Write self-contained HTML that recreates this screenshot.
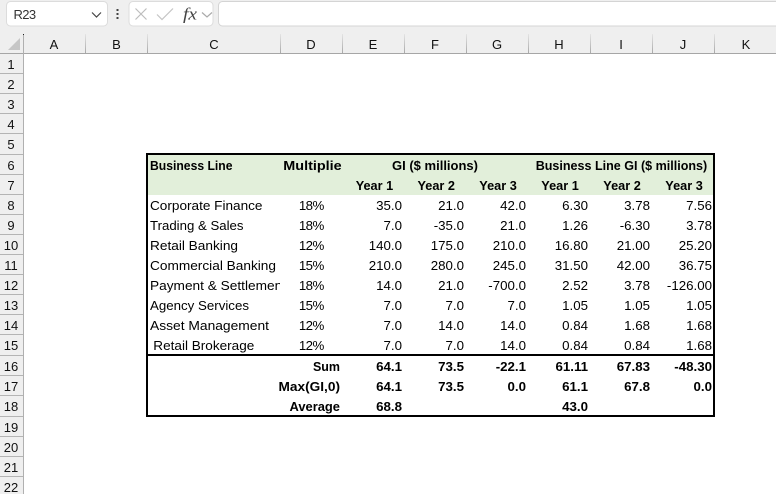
<!DOCTYPE html>
<html><head><meta charset="utf-8"><title>Sheet</title>
<style>
html,body{margin:0;padding:0;width:776px;height:494px;overflow:hidden;background:#fff}
svg{display:block;font-family:"Liberation Sans",sans-serif}
.h text{font-size:13px;fill:#111;text-anchor:middle}
.t text{font-size:13.3px;fill:#000}
.n text{font-size:13.3px;fill:#000;text-anchor:end}
.p text{font-size:13.3px;fill:#000;text-anchor:middle;letter-spacing:-.6px}
.b text{font-weight:bold}
</style></head><body>
<svg width="776" height="494" viewBox="0 0 776 494" xmlns="http://www.w3.org/2000/svg">
<defs>
<clipPath id="c1"><rect x="280" y="150" width="62" height="30"/></clipPath>
<clipPath id="c2"><rect x="148" y="275" width="132" height="20"/></clipPath>
<linearGradient id="sep" x1="0" y1="0" x2="0" y2="1"><stop offset="0" stop-color="#e4e4e4"/><stop offset="1" stop-color="#a8a8a8"/></linearGradient>
</defs>
<!-- toolbar -->
<rect x="0" y="0" width="776" height="54" fill="#efefef"/>
<rect x="6.5" y="1.5" width="101" height="24.5" rx="4" fill="#fff" stroke="#dcdcdc"/>
<text x="13.5" y="19" font-size="13" fill="#333" letter-spacing="-.6">R23</text>
<path d="M92 12.5l4.5 4.5 4.5-4.5" fill="none" stroke="#444" stroke-width="1.2"/>
<rect x="116.5" y="9" width="2" height="2" fill="#444"/><rect x="116.5" y="13" width="2" height="2" fill="#444"/><rect x="116.5" y="17" width="2" height="2" fill="#444"/>
<rect x="129" y="1.5" width="84" height="24.5" rx="4" fill="#fff" stroke="#dcdcdc"/>
<path d="M135.5 8.5l11 11M146.5 8.5l-11 11" stroke="#bdbdbd" stroke-width="1.2" fill="none"/>
<path d="M157 14.5l5 5 11-11" stroke="#c4c4c4" stroke-width="1.2" fill="none"/>
<text x="183" y="19.5" font-family="Liberation Serif,serif" font-style="italic" font-size="17" fill="#444" textLength="14" lengthAdjust="spacingAndGlyphs">fx</text>
<path d="M202 12.5l5 4.5 5-4.5" fill="none" stroke="#aaa" stroke-width="1.2"/>
<rect x="218.5" y="1.5" width="570" height="24.5" rx="4" fill="#fff" stroke="#d4d4d4"/>
<!-- headers -->
<rect x="0" y="53" width="776" height="1" fill="#a6a6a6"/>
<rect x="0" y="54" width="23" height="440" fill="#efefef"/>
<rect x="23" y="34" width="1" height="460" fill="#b0b0b0"/>
<rect x="23" y="34" width="1" height="1" fill="#222"/>
<path d="M20 38V50H8Z" fill="#c6c6c6"/>
<g fill="url(#sep)">
<rect x="85" y="34" width="1" height="19"/><rect x="147" y="34" width="1" height="19"/><rect x="280" y="34" width="1" height="19"/>
<rect x="342" y="34" width="1" height="19"/><rect x="404" y="34" width="1" height="19"/><rect x="466" y="34" width="1" height="19"/>
<rect x="528" y="34" width="1" height="19"/><rect x="590" y="34" width="1" height="19"/><rect x="652" y="34" width="1" height="19"/><rect x="714" y="34" width="1" height="19"/>
</g>
<g fill="#b4b4b4">
<rect x="0" y="73" width="23" height="1"/><rect x="0" y="93" width="23" height="1"/><rect x="0" y="113" width="23" height="1"/><rect x="0" y="133" width="23" height="1"/><rect x="0" y="154" width="23" height="1"/><rect x="0" y="174" width="23" height="1"/><rect x="0" y="194" width="23" height="1"/><rect x="0" y="214" width="23" height="1"/><rect x="0" y="234" width="23" height="1"/><rect x="0" y="254" width="23" height="1"/><rect x="0" y="274" width="23" height="1"/><rect x="0" y="294" width="23" height="1"/><rect x="0" y="314" width="23" height="1"/><rect x="0" y="334" width="23" height="1"/><rect x="0" y="355" width="23" height="1"/><rect x="0" y="375" width="23" height="1"/><rect x="0" y="395" width="23" height="1"/><rect x="0" y="416" width="23" height="1"/><rect x="0" y="436" width="23" height="1"/><rect x="0" y="456" width="23" height="1"/><rect x="0" y="476" width="23" height="1"/>
</g>
<g class="h">
<text x="54" y="49">A</text><text x="116.5" y="49">B</text><text x="214" y="49">C</text><text x="311" y="49">D</text><text x="373" y="49">E</text><text x="435" y="49">F</text><text x="497" y="49">G</text><text x="559" y="49">H</text><text x="621" y="49">I</text><text x="683" y="49">J</text><text x="746" y="49">K</text>
<text x="11" y="69">1</text><text x="11" y="89">2</text><text x="11" y="109">3</text><text x="11" y="129">4</text><text x="11" y="149">5</text><text x="11" y="170">6</text><text x="11" y="190">7</text><text x="11" y="210">8</text><text x="11" y="230">9</text><text x="11" y="250">10</text><text x="11" y="270">11</text><text x="11" y="290">12</text><text x="11" y="310">13</text><text x="11" y="330">14</text><text x="11" y="350">15</text><text x="11" y="371">16</text><text x="11" y="391">17</text><text x="11" y="411">18</text><text x="11" y="432">19</text><text x="11" y="452">20</text><text x="11" y="472">21</text><text x="11" y="492">22</text>
</g>
<!-- table fill + borders -->
<rect x="148" y="155" width="566" height="40" fill="#e2efda"/>
<rect x="146" y="153" width="569" height="2" fill="#000"/>
<rect x="146" y="153" width="2" height="264" fill="#000"/>
<rect x="713" y="153" width="2" height="264" fill="#000"/>
<rect x="146" y="354" width="569" height="2" fill="#000"/>
<rect x="146" y="415" width="569" height="2" fill="#000"/>
<!-- header text -->
<g class="t b">
<text x="150" y="170" textLength="82.5" lengthAdjust="spacingAndGlyphs">Business Line</text>
<text x="283.3" y="170" textLength="64" lengthAdjust="spacingAndGlyphs" clip-path="url(#c1)">Multiplier</text>
<text x="392" y="170" textLength="86" lengthAdjust="spacingAndGlyphs">GI ($ millions)</text>
<text x="535.7" y="170" textLength="171.5" lengthAdjust="spacingAndGlyphs">Business Line GI ($ millions)</text>
<text x="355.7" y="190" textLength="37.5" lengthAdjust="spacingAndGlyphs">Year 1</text>
<text x="417.5" y="190" textLength="37.5" lengthAdjust="spacingAndGlyphs">Year 2</text>
<text x="479.3" y="190" textLength="37.5" lengthAdjust="spacingAndGlyphs">Year 3</text>
<text x="541.3" y="190" textLength="37.5" lengthAdjust="spacingAndGlyphs">Year 1</text>
<text x="603.3" y="190" textLength="37.5" lengthAdjust="spacingAndGlyphs">Year 2</text>
<text x="665.3" y="190" textLength="37.5" lengthAdjust="spacingAndGlyphs">Year 3</text>
</g>
<!-- labels -->
<g class="t">
<text x="150" y="210" textLength="112.5" lengthAdjust="spacingAndGlyphs">Corporate Finance</text>
<text x="150" y="230" textLength="93.5" lengthAdjust="spacingAndGlyphs">Trading &amp; Sales</text>
<text x="150" y="250" textLength="88" lengthAdjust="spacingAndGlyphs">Retail Banking</text>
<text x="150" y="270" textLength="126" lengthAdjust="spacingAndGlyphs">Commercial Banking</text>
<text x="150" y="290" textLength="136" lengthAdjust="spacingAndGlyphs" clip-path="url(#c2)">Payment &amp; Settlement</text>
<text x="150" y="310" textLength="99" lengthAdjust="spacingAndGlyphs">Agency Services</text>
<text x="150" y="330" textLength="119" lengthAdjust="spacingAndGlyphs">Asset Management</text>
<text x="153.3" y="350" textLength="101" lengthAdjust="spacingAndGlyphs">Retail Brokerage</text>
</g>
<g class="p">
<text x="311.3" y="210">18%</text><text x="311.3" y="230">18%</text><text x="311.3" y="250">12%</text><text x="311.3" y="270">15%</text><text x="311.3" y="290">18%</text><text x="311.3" y="310">15%</text><text x="311.3" y="330">12%</text><text x="311.3" y="350">12%</text>
</g>
<g class="n">
<text x="402" y="210">35.0</text><text x="402" y="230">7.0</text><text x="402" y="250">140.0</text><text x="402" y="270">210.0</text><text x="402" y="290">14.0</text><text x="402" y="310">7.0</text><text x="402" y="330">7.0</text><text x="402" y="350">7.0</text>
<text x="464" y="210">21.0</text><text x="464" y="230">-35.0</text><text x="464" y="250">175.0</text><text x="464" y="270">280.0</text><text x="464" y="290">21.0</text><text x="464" y="310">7.0</text><text x="464" y="330">14.0</text><text x="464" y="350">7.0</text>
<text x="526" y="210">42.0</text><text x="526" y="230">21.0</text><text x="526" y="250">210.0</text><text x="526" y="270">245.0</text><text x="526" y="290">-700.0</text><text x="526" y="310">7.0</text><text x="526" y="330">14.0</text><text x="526" y="350">14.0</text>
<text x="588" y="210">6.30</text><text x="588" y="230">1.26</text><text x="588" y="250">16.80</text><text x="588" y="270">31.50</text><text x="588" y="290">2.52</text><text x="588" y="310">1.05</text><text x="588" y="330">0.84</text><text x="588" y="350">0.84</text>
<text x="650" y="210">3.78</text><text x="650" y="230">-6.30</text><text x="650" y="250">21.00</text><text x="650" y="270">42.00</text><text x="650" y="290">3.78</text><text x="650" y="310">1.05</text><text x="650" y="330">1.68</text><text x="650" y="350">0.84</text>
<text x="712" y="210">7.56</text><text x="712" y="230">3.78</text><text x="712" y="250">25.20</text><text x="712" y="270">36.75</text><text x="712" y="290">-126.00</text><text x="712" y="310">1.05</text><text x="712" y="330">1.68</text><text x="712" y="350">1.68</text>
</g>
<g class="n b">
<text x="340" y="371" textLength="27" lengthAdjust="spacingAndGlyphs">Sum</text>
<text x="340" y="391" textLength="61.5" lengthAdjust="spacingAndGlyphs">Max(GI,0)</text>
<text x="340" y="411" textLength="50.5" lengthAdjust="spacingAndGlyphs">Average</text>
<text x="402" y="371">64.1</text><text x="402" y="391">64.1</text><text x="402" y="411">68.8</text>
<text x="464" y="371">73.5</text><text x="464" y="391">73.5</text>
<text x="526" y="371">-22.1</text><text x="526" y="391">0.0</text>
<text x="588" y="371">61.11</text><text x="588" y="391">61.1</text><text x="588" y="411">43.0</text>
<text x="650" y="371">67.83</text><text x="650" y="391">67.8</text>
<text x="712" y="371">-48.30</text><text x="712" y="391">0.0</text>
</g>
</svg>
</body></html>
